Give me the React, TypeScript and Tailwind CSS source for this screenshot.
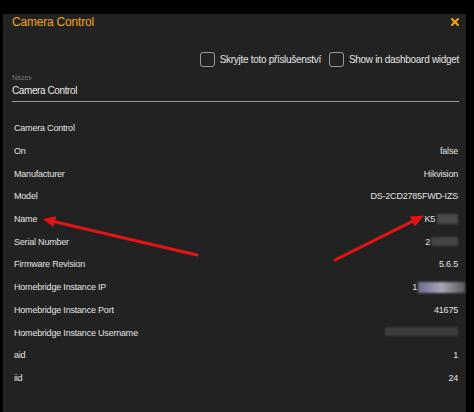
import React from "react";

const rows: { label: string; value: React.ReactNode }[] = [
  { label: "Camera Control", value: "" },
  { label: "On", value: "false" },
  { label: "Manufacturer", value: "Hikvision" },
  { label: "Model", value: "DS-2CD2785FWD-IZS" },
  {
    label: "Name",
    value: (
      <span className="flex items-center">
        <span>K5</span>
        <span className="ml-[2px] inline-block h-[10px] w-[21px] bg-[#4a4a4a] blur-[1px]" />
      </span>
    ),
  },
  {
    label: "Serial Number",
    value: (
      <span className="flex items-center">
        <span>2</span>
        <span className="ml-[1px] inline-block h-[9px] w-[27px] bg-[#454545] blur-[1px]" />
      </span>
    ),
  },
  { label: "Firmware Revision", value: "5.6.5" },
  {
    label: "Homebridge Instance IP",
    value: (
      <span className="-mr-[7px] flex items-center">
        <span>1</span>
        <span className="ml-[1px] inline-block h-[11px] w-[47px] bg-gradient-to-r from-[#6e6c90] via-[#a8a8b8] to-[#5a5a5a] blur-[1px]" />
      </span>
    ),
  },
  { label: "Homebridge Instance Port", value: "41675" },
  {
    label: "Homebridge Instance Username",
    value: <span className="inline-block h-[9px] w-[73px] bg-[#3d3d3d] blur-[1px]" />,
  },
  { label: "aid", value: "1" },
  { label: "iid", value: "24" },
];

function Checkbox({ label }: { label: string }) {
  return (
    <div className="flex items-center">
      <span className="inline-block h-[15px] w-[15px] rounded-[3px] border-[1.5px] border-[#9a9a9a]" />
      <span className="ml-[5px] text-[10px] leading-[14px] tracking-[-0.3px] text-[#e2e2e2]">{label}</span>
    </div>
  );
}

export default function App() {
  return (
    <div
      className="relative h-[412px] w-[474px] overflow-hidden bg-black pl-[3px] pt-[4px] font-['Liberation_Sans',Arial,sans-serif]"
    >
      <div className="h-[401px] w-[463px] bg-[#222222] pl-[9px] pr-[7px]">
        <div className="mt-[10px] flex h-[16px] items-center justify-between">
          <span className="text-[12px] leading-[16px] tracking-[-0.2px] text-[#f3a41c]">Camera Control</span>
          <svg width="8" height="8" viewBox="0 0 8 8">
            <path d="M1 1L7 7M7 1L1 7" stroke="#f3a41c" strokeWidth="2" strokeLinecap="square" />
          </svg>
        </div>
        <div className="mt-[22px] flex h-[15px] items-center justify-end gap-[8px]">
          <Checkbox label="Skryjte toto příslušenství" />
          <Checkbox label="Show in dashboard widget" />
        </div>
        <div className="mt-[6px] text-[7px] leading-[9px] text-[#777777]">Název</div>
        <div className="border-b border-[#9a9a9a] pb-[3px] pt-[2px] text-[10px] leading-[14px] tracking-[-0.4px] text-[#e8e8e8]">
          Camera Control
        </div>
        <div className="mt-[15px] pl-[2px] pr-[1px]">
          {rows.map((r) => (
            <div
              key={r.label}
              className="flex h-[22.7px] items-center justify-between text-[9px] leading-[12px] tracking-[-0.2px] text-[#e2e2e2]"
            >
              <span>{r.label}</span>
              <span>{r.value}</span>
            </div>
          ))}
        </div>
      </div>
      <svg
        className="pointer-events-none absolute left-0 top-0"
        width="474"
        height="412"
        viewBox="0 0 474 412"
      >
        <line x1="197" y1="255" x2="54.7" y2="221.7" stroke="#e41414" strokeWidth="3" strokeLinecap="round" />
        <polygon points="43,219 56.2,216.3 53.2,227.1" fill="#e41414" />
        <line x1="335" y1="260" x2="412.3" y2="221.4" stroke="#e41414" strokeWidth="3" strokeLinecap="round" />
        <polygon points="424,215.5 414.9,226.4 409.7,216.4" fill="#e41414" />
      </svg>
    </div>
  );
}
